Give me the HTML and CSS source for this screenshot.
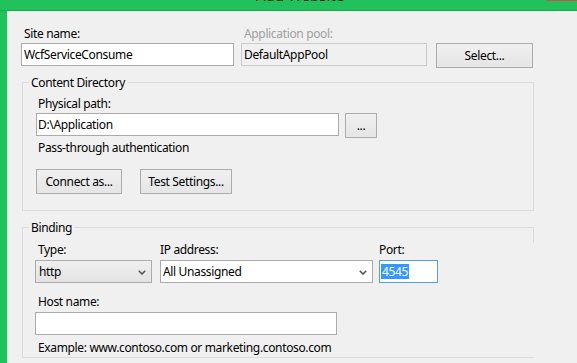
FILE: index.html
```html
<!DOCTYPE html>
<html>
<head>
<meta charset="utf-8">
<title>Add Website</title>
<link rel="stylesheet" href="styles.css">
</head>
<body>
<div class="window">
  <div class="titlebar">
    <span class="title">Add Website</span>
    <span class="close"></span>
  </div>
  <div class="frame">
    <div class="dialog">
      <div class="top-row">
        <div class="field site">
          <div class="label">Site name:</div>
          <div class="input">WcfServiceConsume</div>
        </div>
        <div class="field pool">
          <div class="label disabled">Application pool:</div>
          <div class="input readonly">DefaultAppPool</div>
        </div>
        <div class="btn select">Select...</div>
      </div>

      <fieldset class="group content-dir">
        <legend>Content Directory</legend>
        <div class="group-body">
          <div class="label tight">Physical path:</div>
          <div class="path-row">
            <div class="input path">D:\Application</div>
            <div class="btn browse">...</div>
          </div>
          <div class="label tight note">Pass-through authentication</div>
          <div class="button-row">
            <div class="btn connect">Connect as...</div>
            <div class="btn test">Test Settings...</div>
          </div>
        </div>
      </fieldset>

      <fieldset class="group binding">
        <legend>Binding</legend>
        <div class="group-body">
          <div class="binding-row">
            <div class="field type">
              <div class="label">Type:</div>
              <div class="combo grey"><span>http</span>
                <svg class="chev" width="8" height="5" viewBox="0 0 8 5"><polyline points="0.8,0.8 4,4 7.2,0.8" fill="none" stroke="#555" stroke-width="1.6"/></svg>
              </div>
            </div>
            <div class="field ip">
              <div class="label flush">IP address:</div>
              <div class="combo"><span>All Unassigned</span>
                <svg class="chev" width="8" height="5" viewBox="0 0 8 5"><polyline points="0.8,0.8 4,4 7.2,0.8" fill="none" stroke="#555" stroke-width="1.6"/></svg>
              </div>
            </div>
            <div class="field port">
              <div class="label flush">Port:</div>
              <div class="input focused"><span class="sel">4545</span></div>
            </div>
          </div>
          <div class="label host-label">Host name:</div>
          <div class="input host"></div>
          <div class="label example">Example: www.contoso.com or marketing.contoso.com</div>
        </div>
      </fieldset>
    </div>
  </div>
</div>
</body>
</html>
```

FILE: styles.css
```css
html, body {
  margin: 0;
  padding: 0;
  height: 100%;
  overflow: hidden;
}

body {
  background: #21c25b;
  font-family: "Noto Sans", "Open Sans", sans-serif;
  font-size: 12px;
  letter-spacing: -0.35px;
  color: #000;
}

.window {
  display: flex;
  flex-direction: column;
  height: 363px;
}

.titlebar {
  height: 10px;
  display: flex;
  align-items: flex-start;
  overflow: hidden;
  border-bottom: 1px solid #1ca64d;
}

.title {
  flex: 1;
  padding-left: 256px;
  margin-top: -12px;
  font-size: 15px;
  line-height: 15px;
  letter-spacing: 0;
  color: #1a1a1a;
}

.close {
  width: 31px;
  height: 1px;
  background: #c75050;
}

.frame {
  flex: 1;
  display: flex;
  padding-left: 7px;
}

.dialog {
  flex: 1;
  background: #f0f0f0;
  padding: 15px 0 0 14px;
}

.label {
  line-height: 15px;
  padding-left: 3px;
  margin-bottom: 2px;
  white-space: nowrap;
}

.label.tight { padding-left: 2px; }
.label.flush { padding-left: 0; }
.label.disabled { color: #a0a0a0; }

.input {
  box-sizing: border-box;
  height: 23px;
  border: 1px solid #ababab;
  background: #fff;
  line-height: 21px;
  padding-left: 2px;
  white-space: nowrap;
  overflow: hidden;
}

.input.readonly {
  background: #f0f0f0;
  border-color: #cbcbcb;
}

.btn {
  box-sizing: border-box;
  height: 25px;
  border: 1px solid #acacac;
  background: linear-gradient(#f0f0f0, #e5e5e5);
  line-height: 23px;
  text-align: center;
  white-space: nowrap;
}

/* top row */
.top-row {
  display: flex;
  align-items: flex-start;
}

.site { width: 213px; }
.pool { width: 186px; margin-left: 7px; }
.select { width: 97px; margin-left: 9px; margin-top: 17px; }

/* group boxes */
.group {
  box-sizing: border-box;
  width: 512px;
  margin: 7px 0 0 1px;
  padding: 0;
  border: 1px solid #dcdcdc;
  min-width: 0;
}

.group legend {
  margin-left: 6px;
  padding: 0 2px;
  line-height: 15px;
}

.content-dir .group-body {
  padding: 6px 0 16px 13px;
}

.path-row {
  display: flex;
  align-items: flex-start;
}

.path { width: 303px; padding-left: 1px; }
.browse { width: 32px; margin-left: 6px; }

.note { margin-top: 2px; }

.button-row {
  display: flex;
  margin-top: 14px;
}

.connect { width: 86px; }
.test { width: 92px; margin-left: 18px; }

/* binding */
.binding {
  margin-top: 9px;
  border-right-color: transparent;
  position: relative;
}

.binding::after {
  content: "";
  position: absolute;
  right: -1px;
  top: -8px;
  width: 1px;
  height: 16px;
  background: #dcdcdc;
}

.binding .group-body {
  padding: 7px 0 0 12px;
}

.binding-row {
  display: flex;
  align-items: flex-start;
}

.binding-row .label { margin-bottom: 3px; }

.type { width: 117px; }
.ip { width: 213px; margin-left: 8px; }
.port { width: 59px; margin-left: 6px; }

.combo {
  box-sizing: border-box;
  height: 23px;
  border: 1px solid #ababab;
  background: #fff;
  display: flex;
  align-items: center;
  justify-content: space-between;
  padding: 0 5px 0 2px;
  white-space: nowrap;
}

.combo.grey {
  background: linear-gradient(#efefef, #e3e3e3);
  padding-left: 3px;
}

.chev { display: block; margin-top: 1px; }

.input.focused {
  border-color: #569de5;
  padding-left: 1px;
}

.sel {
  background: #3399ff;
  color: #fff;
  line-height: 15px;
  display: inline-block;
  padding: 0 1px;
}

.host-label { margin-top: 11px; margin-bottom: 3px; }
.host { width: 302px; }
.example { margin-top: 5px; }
```
